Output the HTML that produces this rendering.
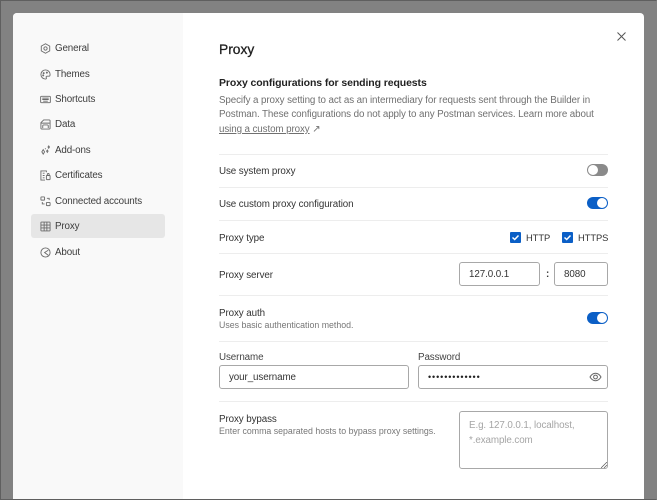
<!DOCTYPE html>
<html><head><meta charset="utf-8">
<style>
html,body{margin:0;padding:0;width:657px;height:500px;overflow:hidden;background:#828282}
body{position:relative;font-family:"Liberation Sans",sans-serif;color:#3a3a3a}
.a{position:absolute;white-space:nowrap}
#frame{left:0;top:0;width:655px;height:498px;border:1px solid #5f5f5f;border-right-color:#828282}
#modal{left:13px;top:13px;width:631px;height:486px;background:#fff;border-radius:4px 4px 0 0;overflow:hidden}
#side{left:13px;top:13px;width:170px;height:486px;background:#f9f9f9;border-radius:4px 0 0 0}
#sel{left:31px;top:214px;width:134px;height:24px;background:#e6e6e6;border-radius:3px}
.n{left:55px;font-size:9.8px;line-height:14px;color:#3c3c3c;letter-spacing:-.13px;margin-top:1px}
.i{position:absolute;left:39.5px;width:11px;height:11px;margin-top:.5px;fill:none;stroke:#6b6b6b;stroke-width:1}
.t{left:219px;font-size:9.8px;line-height:14px;color:#333;letter-spacing:-.09px}
.d{left:219px;font-size:8.8px;line-height:12px;color:#777}
.p{left:219px;font-size:9.8px;line-height:14px;color:#707070;letter-spacing:-.1px}
.h{position:absolute;left:219px;width:389px;height:1px;background:#ededed}
.sw{position:absolute;left:587px;width:21px;height:12px;border-radius:6px;background:#0b5fc6}
.sw:after{content:"";position:absolute;right:1px;top:1px;width:10px;height:10px;border-radius:5px;background:#fff}
.sw.off{background:#8a8a8a}.sw.off:after{right:auto;left:1px}
.in{position:absolute;box-sizing:border-box;background:#fff;border:1px solid #a8a8a8;border-radius:3px;font-size:9.8px;color:#333;line-height:24px;padding-left:9px;letter-spacing:-.09px;white-space:nowrap}
.cb{position:absolute;top:232px;width:11px;height:11px;background:#0b5fc6;border-radius:1px}
.cb svg{display:block}
</style></head><body>
<div class="a" id="frame"></div>
<div class="a" id="modal"></div>
<div class="a" id="side"></div>
<div class="a" id="sel"></div>

<svg class="i" style="top:42px" viewBox="0 0 12 12"><path d="M6 .8l4.600 2.600v5.200L6 11.200 1.400 8.600V3.400z"/><circle cx="6" cy="6" r="1.800"/></svg>
<div class="a n" style="top:41px">General</div>
<svg class="i" style="top:68px" viewBox="0 0 12 12"><path d="M6 1a5 5 0 1 0 0 10c1.200 0 1.200-1 .8-1.700-.4-.8 0-1.500 1-1.500H10c.8 0 1-.8 1-1.800A5 5 0 0 0 6 1z"/><circle cx="4" cy="4.500" r=".6"/><circle cx="7.500" cy="4" r=".6"/><circle cx="3.500" cy="7" r=".6"/></svg>
<div class="a n" style="top:67px">Themes</div>
<svg class="i" style="top:93px" viewBox="0 0 12 12"><rect x=".7" y="2.500" width="10.600" height="7" rx=".8"/><path d="M2.500 4.500h7M2.500 6h7M3.500 7.800h5"/></svg>
<div class="a n" style="top:92px">Shortcuts</div>
<svg class="i" style="top:118px" viewBox="0 0 12 12"><path d="M4 1h6a1 1 0 0 1 1 1v8a1 1 0 0 1-1 1H2a1 1 0 0 1-1-1V4z"/><path d="M3 10V7.500a1 1 0 0 1 1-1h4a1 1 0 0 1 1 1V10M1.500 4.500h9"/></svg>
<div class="a n" style="top:117px">Data</div>
<svg class="i" style="top:144px" viewBox="0 0 12 12"><path d="M3.500 5l1.500 2.500L3.500 10 2 7.500zM8 5.500l.8 1.200-.8 1.300-.8-1.300zM9.500 1l.8 1.200-.8 1.300-.8-1.300z"/><path d="M5.500 4.500l.8-.8"/></svg>
<div class="a n" style="top:143px">Add-ons</div>
<svg class="i" style="top:169px" viewBox="0 0 12 12"><path d="M7 2.500V1H1v10h4.500M3 3.500h2M3 6h2M3 8.500h2"/><rect x="7" y="6" width="4" height="4.500" rx=".5"/><path d="M8 6V4.800a1 1 0 0 1 2 0V6"/></svg>
<div class="a n" style="top:168px">Certificates</div>
<svg class="i" style="top:195px" viewBox="0 0 12 12"><rect x="1" y="1" width="4" height="3.500" rx=".6"/><rect x="7" y="7" width="4" height="3.500" rx=".6"/><path d="M2.500 6.500v2.200H5M7.500 2.500H10v2"/></svg>
<div class="a n" style="top:194px">Connected accounts</div>
<svg class="i" style="top:220px" viewBox="0 0 12 12"><rect x="1" y="1.200" width="10" height="9.600" rx=".6"/><path d="M1 4.400h10M1 7.600h10M4.500 1.200v9.600M7.500 1.200v9.600"/></svg>
<div class="a n" style="top:219px">Proxy</div>
<svg class="i" style="top:246px" viewBox="0 0 12 12"><circle cx="6" cy="6" r="5"/><path d="M9 3.500L5 6l4 3"/></svg>
<div class="a n" style="top:245px">About</div>

<svg class="a" style="left:616px;top:31px" width="11" height="11" viewBox="0 0 11 11" fill="none" stroke="#555" stroke-width="1"><path d="M1.500 1.500l8 8M9.500 1.500l-8 8"/></svg>

<div class="a" style="left:219px;top:41px;font-size:13.800px;line-height:18px;color:#1f1f1f;-webkit-text-stroke:.3px #1f1f1f">Proxy</div>
<div class="a" style="left:219px;top:76px;font-size:10.500px;line-height:14px;font-weight:bold;color:#222;letter-spacing:-.1px">Proxy configurations for sending requests</div>
<div class="a p" style="top:94px">Specify a proxy setting to act as an intermediary for requests sent through the Builder in</div>
<div class="a p" style="top:108px">Postman. These configurations do not apply to any Postman services. Learn more about</div>
<div class="a p" style="top:123px"><span style="text-decoration:underline">using a custom proxy</span> ↗</div>

<div class="h" style="top:154px"></div>
<div class="a t" style="top:165px">Use system proxy</div>
<div class="sw off" style="top:164px"></div>
<div class="h" style="top:187px"></div>
<div class="a t" style="top:198px">Use custom proxy configuration</div>
<div class="sw" style="top:197px"></div>
<div class="h" style="top:220px"></div>
<div class="a t" style="top:232px">Proxy type</div>

<div class="cb" style="left:510px"><svg width="11" height="11" viewBox="0 0 11 11" fill="none" stroke="#fff" stroke-width="1.500"><path d="M2.500 5.500l2.200 2L8.500 3.500"/></svg></div>
<div class="a t" style="left:526px;top:231px;font-size:9.400px">HTTP</div>
<div class="cb" style="left:562px"><svg width="11" height="11" viewBox="0 0 11 11" fill="none" stroke="#fff" stroke-width="1.500"><path d="M2.500 5.500l2.200 2L8.500 3.500"/></svg></div>
<div class="a t" style="left:578px;top:231px;font-size:9.400px">HTTPS</div>

<div class="h" style="top:253px"></div>
<div class="a t" style="top:269px">Proxy server</div>
<div class="in" style="left:459px;top:262px;width:81px;height:24px">127.0.0.1</div>
<div class="a t" style="left:546px;top:268px;font-weight:bold">:</div>
<div class="in" style="left:554px;top:262px;width:54px;height:24px">8080</div>

<div class="h" style="top:295px"></div>
<div class="a t" style="top:307px">Proxy auth</div>
<div class="a d" style="top:319px">Uses basic authentication method.</div>
<div class="sw" style="top:312px"></div>
<div class="h" style="top:341px"></div>

<div class="a t" style="top:351px;color:#444">Username</div>
<div class="in" style="left:219px;top:365px;width:190px;height:24px">your_username</div>
<div class="a t" style="left:418px;top:351px;color:#444">Password</div>
<div class="in" style="left:418px;top:365px;width:190px;height:24px;font-size:9px;line-height:22px;letter-spacing:.9px;color:#222;padding-left:9px">•••••••••••••</div>
<svg class="a" style="left:589px;top:371px" width="13" height="12" viewBox="0 0 13 12" fill="none" stroke="#666" stroke-width="1"><path d="M1 6c1.500-2.500 3.300-3.700 5.500-3.700S10.500 3.500 12 6c-1.500 2.500-3.300 3.700-5.500 3.700S2.500 8.500 1 6z"/><circle cx="6.500" cy="6" r="1.900"/></svg>

<div class="h" style="top:401px"></div>
<div class="a t" style="top:413px">Proxy bypass</div>
<div class="a d" style="top:425px">Enter comma separated hosts to bypass proxy settings.</div>
<div class="in" style="left:459px;top:411px;width:149px;height:58px;color:#a5a5a5;line-height:15px;padding-top:6px;white-space:normal">E.g. 127.0.0.1, localhost,<br>*.example.com</div>
<svg class="a" style="left:601px;top:462px" width="6" height="6" viewBox="0 0 6 6" fill="none" stroke="#555" stroke-width=".7"><path d="M0 6L6 0M3 6l3-3"/></svg>
</body></html>
